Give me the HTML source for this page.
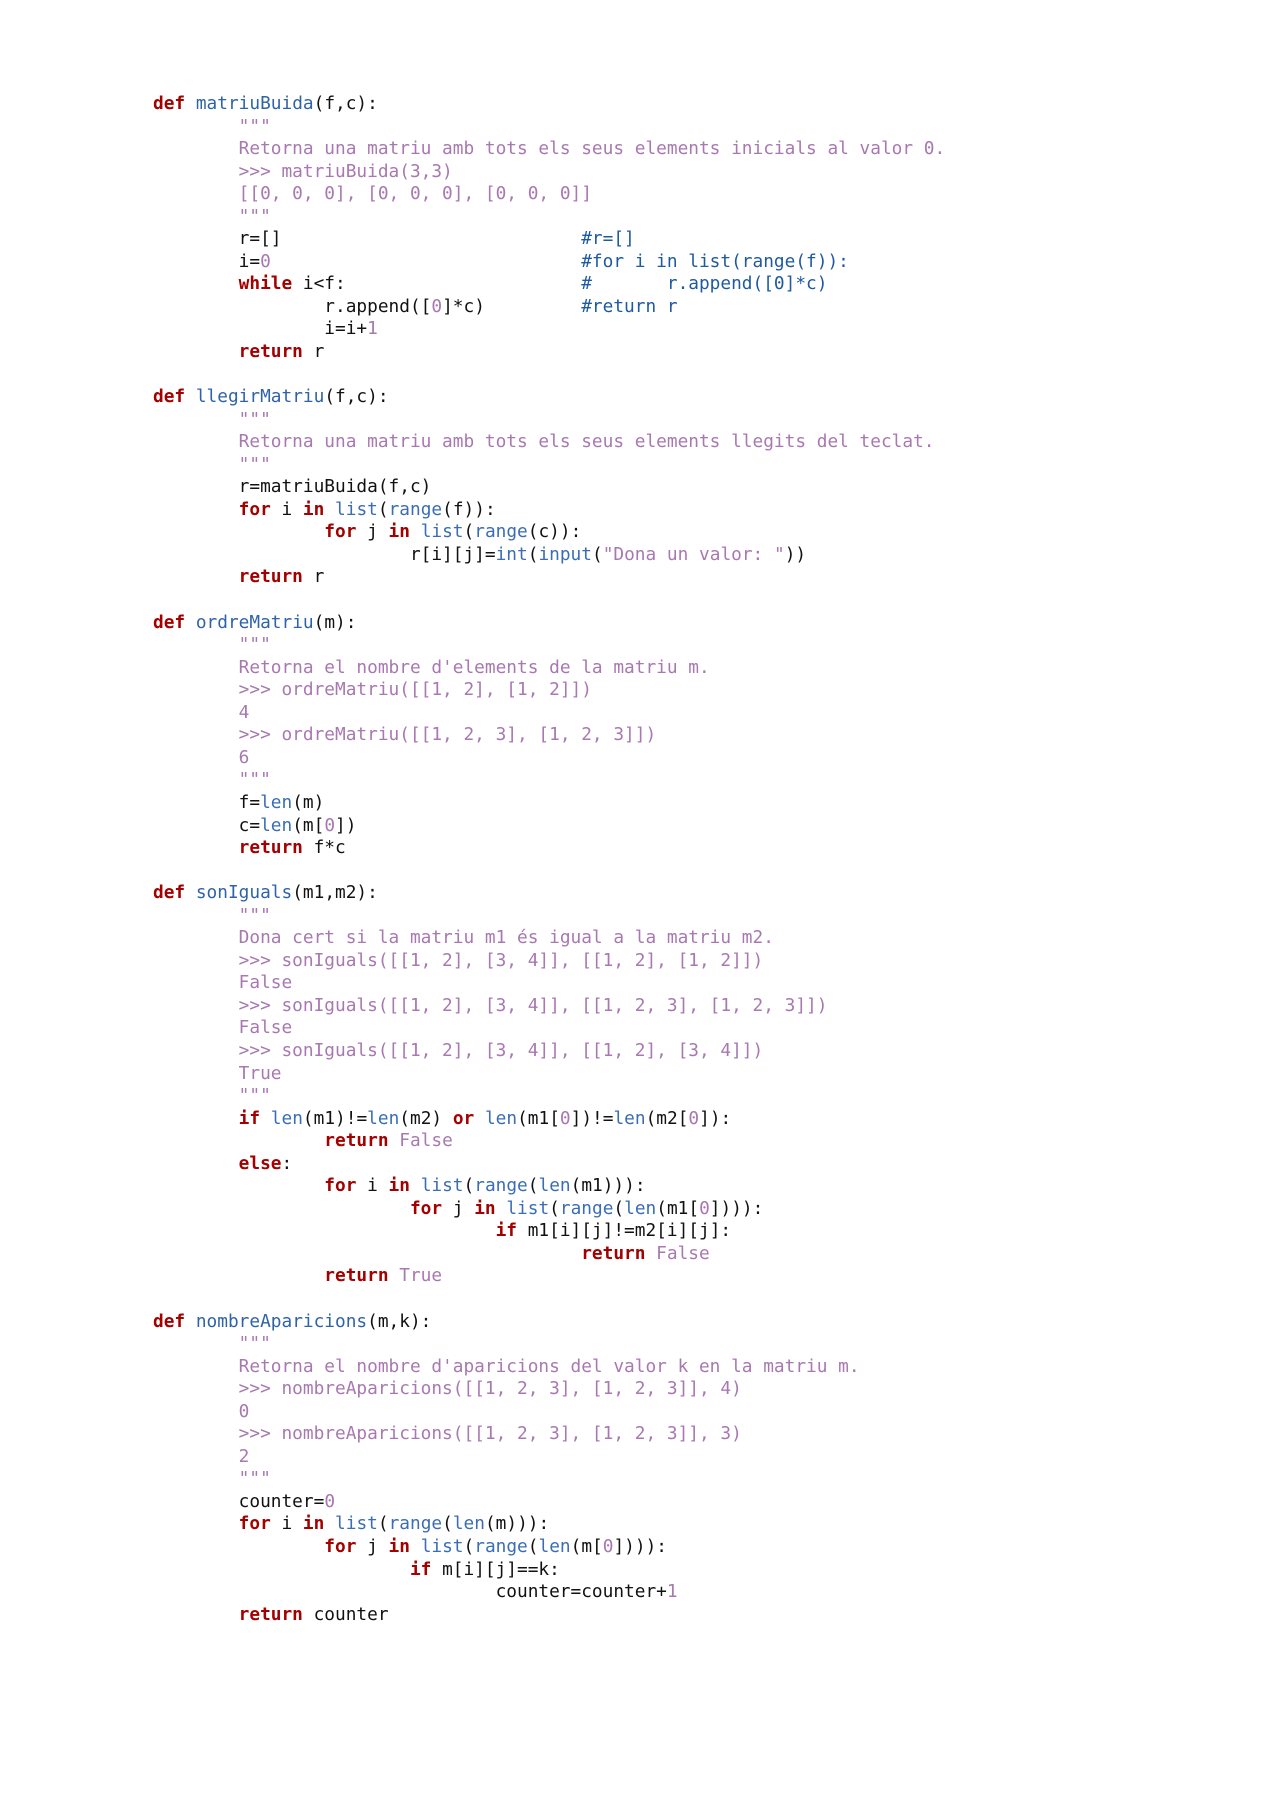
<!DOCTYPE html>
<html><head><meta charset="utf-8"><style>
html,body{margin:0;padding:0;background:#fff;width:1280px;height:1811px;overflow:hidden}
pre{position:absolute;left:153px;top:93px;margin:0;font-family:"DejaVu Sans Mono","Liberation Mono",monospace;font-size:17.8px;line-height:22.55px;color:#111;tab-size:8;-moz-tab-size:8}
.k{color:#a30000;font-weight:bold}
.f{color:#2f63a8}
.b{color:#3a6db5}
.s{color:#a878b0}
.c{color:#1f5aa0}
</style></head><body><pre><span class="k">def</span> <span class="f">matriuBuida</span>(f,c):
	<span class="s">"""
	Retorna una matriu amb tots els seus elements inicials al valor 0.
	&gt;&gt;&gt; matriuBuida(3,3)
	[[0, 0, 0], [0, 0, 0], [0, 0, 0]]
	"""</span>
	r=[]				<span class="c">#r=[]</span>
	i=<span class="s">0</span>				<span class="c">#for i in list(range(f)):</span>
	<span class="k">while</span> i&lt;f:			<span class="c">#	r.append([0]*c)</span>
		r.append([<span class="s">0</span>]*c)		<span class="c">#return r</span>
		i=i+<span class="s">1</span>
	<span class="k">return</span> r

<span class="k">def</span> <span class="f">llegirMatriu</span>(f,c):
	<span class="s">"""
	Retorna una matriu amb tots els seus elements llegits del teclat.
	"""</span>
	r=matriuBuida(f,c)
	<span class="k">for</span> i <span class="k">in</span> <span class="b">list</span>(<span class="b">range</span>(f)):
		<span class="k">for</span> j <span class="k">in</span> <span class="b">list</span>(<span class="b">range</span>(c)):
			r[i][j]=<span class="b">int</span>(<span class="b">input</span>(<span class="s">"Dona un valor: "</span>))
	<span class="k">return</span> r

<span class="k">def</span> <span class="f">ordreMatriu</span>(m):
	<span class="s">"""
	Retorna el nombre d'elements de la matriu m.
	&gt;&gt;&gt; ordreMatriu([[1, 2], [1, 2]])
	4
	&gt;&gt;&gt; ordreMatriu([[1, 2, 3], [1, 2, 3]])
	6
	"""</span>
	f=<span class="b">len</span>(m)
	c=<span class="b">len</span>(m[<span class="s">0</span>])
	<span class="k">return</span> f*c

<span class="k">def</span> <span class="f">sonIguals</span>(m1,m2):
	<span class="s">"""
	Dona cert si la matriu m1 és igual a la matriu m2.
	&gt;&gt;&gt; sonIguals([[1, 2], [3, 4]], [[1, 2], [1, 2]])
	False
	&gt;&gt;&gt; sonIguals([[1, 2], [3, 4]], [[1, 2, 3], [1, 2, 3]])
	False
	&gt;&gt;&gt; sonIguals([[1, 2], [3, 4]], [[1, 2], [3, 4]])
	True
	"""</span>
	<span class="k">if</span> <span class="b">len</span>(m1)!=<span class="b">len</span>(m2) <span class="k">or</span> <span class="b">len</span>(m1[<span class="s">0</span>])!=<span class="b">len</span>(m2[<span class="s">0</span>]):
		<span class="k">return</span> <span class="s">False</span>
	<span class="k">else</span>:
		<span class="k">for</span> i <span class="k">in</span> <span class="b">list</span>(<span class="b">range</span>(<span class="b">len</span>(m1))):
			<span class="k">for</span> j <span class="k">in</span> <span class="b">list</span>(<span class="b">range</span>(<span class="b">len</span>(m1[<span class="s">0</span>]))):
				<span class="k">if</span> m1[i][j]!=m2[i][j]:
					<span class="k">return</span> <span class="s">False</span>
		<span class="k">return</span> <span class="s">True</span>

<span class="k">def</span> <span class="f">nombreAparicions</span>(m,k):
	<span class="s">"""
	Retorna el nombre d'aparicions del valor k en la matriu m.
	&gt;&gt;&gt; nombreAparicions([[1, 2, 3], [1, 2, 3]], 4)
	0
	&gt;&gt;&gt; nombreAparicions([[1, 2, 3], [1, 2, 3]], 3)
	2
	"""</span>
	counter=<span class="s">0</span>
	<span class="k">for</span> i <span class="k">in</span> <span class="b">list</span>(<span class="b">range</span>(<span class="b">len</span>(m))):
		<span class="k">for</span> j <span class="k">in</span> <span class="b">list</span>(<span class="b">range</span>(<span class="b">len</span>(m[<span class="s">0</span>]))):
			<span class="k">if</span> m[i][j]==k:
				counter=counter+<span class="s">1</span>
	<span class="k">return</span> counter
</pre></body></html>
